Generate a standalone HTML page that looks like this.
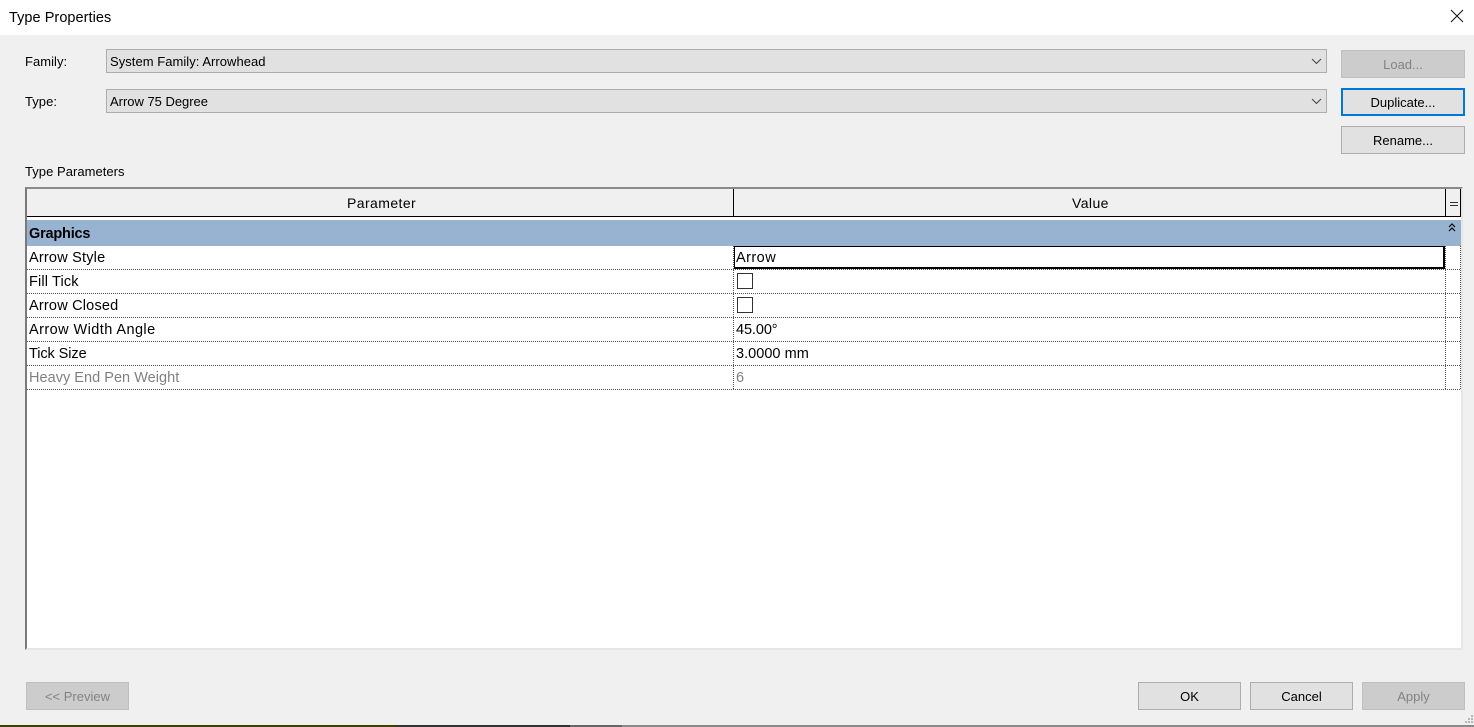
<!DOCTYPE html>
<html><head><meta charset="utf-8"><title>Type Properties</title>
<style>
html,body{margin:0;padding:0;width:1474px;height:727px;overflow:hidden;background:#f0f0f0}
body{position:relative;font-family:"Liberation Sans",sans-serif;color:#000}
div{position:absolute;box-sizing:border-box}
.t{white-space:nowrap;font-size:13px;line-height:16px;letter-spacing:.04px}
.r{white-space:nowrap;font-size:14.5px;line-height:18px;letter-spacing:.03px;left:29px}
.v{left:736px}
.combo{left:106px;width:1221px;height:24px;background:#e1e1e1;border:1px solid #adadad}
.btn{height:28px;width:124px;background:#e1e1e1;border:1px solid #adadad;text-align:center;font-size:13px;line-height:28px;letter-spacing:0;white-space:nowrap}
.dis{background:#cccccc;border-color:#bfbfbf;color:#838383}
.h{height:1px;left:27px;width:1434px;background:repeating-linear-gradient(90deg,#555 0,#555 1px,transparent 1px,transparent 2px)}
.col{width:1px;background:repeating-linear-gradient(180deg,#555 0,#555 1px,transparent 1px,transparent 2px)}
.cb{left:737px;width:16px;height:16px;background:#fff;border:1px solid #333}
</style></head><body>
<div style="left:0;top:0;width:1474px;height:35px;background:#fff"></div>
<div class="t" style="left:9px;top:10px;font-size:14.5px;letter-spacing:.05px">Type Properties</div>
<svg style="position:absolute;left:1450px;top:9px" width="14" height="14" viewBox="0 0 14 14"><path d="M1 1L13 13M13 1L1 13" stroke="#111" stroke-width="1" fill="none"/></svg>

<div class="t" style="left:25px;top:54px">Family:</div>
<div class="combo" style="top:49px"></div>
<div class="t" style="left:110px;top:54px">System Family: Arrowhead</div>
<svg style="position:absolute;left:1311px;top:58px" width="12" height="8"><path d="M1 1L5.5 5.5L10 1" stroke="#444" fill="none"/></svg>

<div class="t" style="left:25px;top:94px">Type:</div>
<div class="combo" style="top:89px"></div>
<div class="t" style="left:110px;top:94px;letter-spacing:-.02px">Arrow 75 Degree</div>
<svg style="position:absolute;left:1311px;top:98px" width="12" height="8"><path d="M1 1L5.5 5.5L10 1" stroke="#444" fill="none"/></svg>

<div class="btn dis" style="left:1341px;top:50px">Load...</div>
<div class="btn" style="left:1341px;top:88px;border:2px solid #0078d7;line-height:26px">Duplicate...</div>
<div class="btn" style="left:1341px;top:126px">Rename...</div>

<div class="t" style="left:25px;top:164px">Type Parameters</div>

<!-- grid -->
<div style="left:25px;top:187px;width:1438px;height:463px;background:#fff;border-left:2px solid #7a7a7a;border-top:2px solid #8a8a8a;border-right:2px solid #e6e6e6;border-bottom:2px solid #e6e6e6"></div>
<div style="left:27px;top:189px;width:1434px;height:28px;background:#f0f0f0;border-bottom:1px solid #000"></div>
<div style="left:733px;top:189px;width:1px;height:27px;background:#000"></div>
<div style="left:1445px;top:189px;width:1px;height:27px;background:#000"></div>
<div style="left:1460px;top:189px;width:1px;height:28px;background:#000"></div>
<div class="r" style="left:347px;top:194px;font-size:14px;letter-spacing:.42px">Parameter</div>
<div class="r" style="left:1072px;top:194px;font-size:14px;letter-spacing:.42px">Value</div>
<div style="left:1450px;top:202px;width:8px;height:1px;background:#333"></div>
<div style="left:1450px;top:205px;width:8px;height:1px;background:#333"></div>

<div style="left:27px;top:220px;width:1434px;height:26px;background:#98b3d1"></div>
<div class="r" style="top:225px;font-weight:bold;letter-spacing:-.2px">Graphics</div>
<svg style="position:absolute;left:1448px;top:223px" width="8" height="10"><path d="M1 4L4 1L7 4M1 8L4 5L7 8" stroke="#000" stroke-width="1.2" fill="none"/></svg>

<div class="h" style="top:269px"></div>
<div class="h" style="top:293px"></div>
<div class="h" style="top:317px"></div>
<div class="h" style="top:341px"></div>
<div class="h" style="top:365px"></div>
<div class="h" style="top:389px"></div>
<div class="col" style="left:733px;top:246px;height:144px"></div>
<div class="col" style="left:1445px;top:246px;height:144px"></div>
<div class="col" style="left:1460px;top:246px;height:144px"></div>

<div style="left:734px;top:246px;width:711px;height:23px;background:#fff;border:2px solid #000;border-left-width:1px;border-top-width:1px"></div>

<div class="r" style="top:249px;letter-spacing:.2px">Arrow Style</div>
<div class="r v" style="top:249px;letter-spacing:.45px">Arrow</div>
<div class="r" style="top:273px;letter-spacing:.15px">Fill Tick</div>
<div class="cb" style="top:273px"></div>
<div class="r" style="top:297px;letter-spacing:.2px">Arrow Closed</div>
<div class="cb" style="top:297px"></div>
<div class="r" style="top:321px;letter-spacing:.43px">Arrow Width Angle</div>
<div class="r v" style="top:321px;letter-spacing:-.1px">45.00°</div>
<div class="r" style="top:345px;letter-spacing:-.08px">Tick Size</div>
<div class="r v" style="top:345px">3.0000 mm</div>
<div class="r" style="top:369px;color:#808080">Heavy End Pen Weight</div>
<div class="r v" style="top:369px;color:#808080">6</div>

<div class="btn dis" style="left:26px;top:682px;width:103px">&lt;&lt; Preview</div>
<div class="btn" style="left:1138px;top:682px;width:103px">OK</div>
<div class="btn" style="left:1250px;top:682px;width:103px">Cancel</div>
<div class="btn dis" style="left:1362px;top:682px;width:103px">Apply</div>

<svg style="position:absolute;left:1464px;top:714px" width="10" height="10"><path d="M7 1h2v2h-2zM4 4h2v2h-2zM7 4h2v2h-2zM1 7h2v2h-2zM4 7h2v2h-2zM7 7h2v2h-2z" fill="#b5b5b5"/></svg>

<div style="left:0;top:725px;width:395px;height:2px;background:#3f3f00"></div>
<div style="left:395px;top:725px;width:175px;height:2px;background:#333"></div>
<div style="left:570px;top:725px;width:52px;height:2px;background:#666"></div>
<div style="left:622px;top:725px;width:852px;height:2px;background:#8a8a8a"></div>
</body></html>
